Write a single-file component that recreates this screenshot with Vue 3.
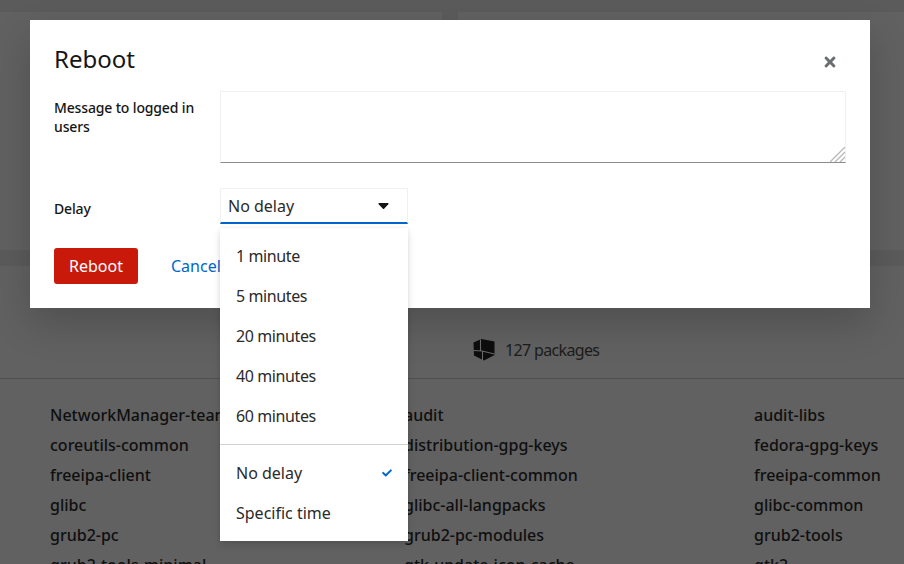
<script setup>
const packages = [
  'NetworkManager-team', 'audit', 'audit-libs',
  'coreutils-common', 'distribution-gpg-keys', 'fedora-gpg-keys',
  'freeipa-client', 'freeipa-client-common', 'freeipa-common',
  'glibc', 'glibc-all-langpacks', 'glibc-common',
  'grub2-pc', 'grub2-pc-modules', 'grub2-tools',
  'grub2-tools-minimal', 'gtk-update-icon-cache', 'gtk2'
]
const timedOptions = ['1 minute', '5 minutes', '20 minutes', '40 minutes', '60 minutes']
</script>

<template>
  <div class="page">
    <div class="cards">
      <div class="card"></div>
      <div class="card"></div>
    </div>
    <section class="details">
      <div class="summary">
        <svg class="bundle" viewBox="0 0 22 23" aria-hidden="true">
          <path d="M.5 4.500 8.500 1 21.500 3.500V17L11 22.500 1 17.500z" fill="#0d0d0d" />
          <path d="M7.500 1.500V13M.5 12.500l8.500.5 12.500 3M9.500 13v9" fill="none" stroke="#6a6a6a" stroke-width="1.100" />
        </svg>
        <span class="count">127 packages</span>
      </div>
      <div class="package-grid">
        <span v-for="name in packages" :key="name" class="package">{{ name }}</span>
      </div>
    </section>

    <div class="backdrop">
      <div class="modal">
        <header class="modal-head">
          <h1>Reboot</h1>
          <button class="close" aria-label="Close">
            <svg viewBox="0 0 352 512" aria-hidden="true">
              <path d="M242.72 256l100.07-100.07c12.28-12.28 12.28-32.19 0-44.48l-22.24-22.24c-12.28-12.28-32.19-12.28-44.48 0L176 189.28 75.93 89.21c-12.28-12.28-32.19-12.28-44.48 0L9.21 111.45c-12.28 12.28-12.28 32.19 0 44.48L109.28 256 9.21 356.07c-12.28 12.28-12.28 32.19 0 44.48l22.24 22.24c12.28 12.28 32.2 12.28 44.48 0L176 322.72l100.07 100.07c12.28 12.28 32.2 12.28 44.48 0l22.24-22.24c12.28-12.28 12.28-32.19 0-44.48L242.72 256z" />
            </svg>
          </button>
        </header>
        <div class="form">
          <label class="label message-label">Message to logged in users</label>
          <div class="message-wrap">
            <textarea class="message"></textarea>
            <svg class="grip" viewBox="0 0 15 15" aria-hidden="true">
              <path d="M0 15 15 0M5 15 15 5M10 15l5-5" fill="none" stroke="#b8b8b8" stroke-width="1.300" />
            </svg>
          </div>
          <label class="label delay-label">Delay</label>
          <div class="select-wrap">
            <div class="select">
              <span>No delay</span>
              <svg class="caret" viewBox="0 0 12 7" aria-hidden="true"><path d="M1 0h10c.9 0 1.3 1 .7 1.6L6.700 6.600c-.4.4-1 .4-1.400 0L.3 1.600C-.3 1 .1 0 1 0z" /></svg>
            </div>
            <div class="menu">
              <div class="menu-group">
                <div v-for="o in timedOptions" :key="o" class="option tight">{{ o }}</div>
              </div>
              <div class="menu-group last">
                <div class="option">
                  <span>No delay</span>
                  <svg class="check" viewBox="0 0 512 512" aria-hidden="true">
                    <path d="M173.898 439.404l-166.4-166.4c-9.997-9.997-9.997-26.206 0-36.204l36.203-36.204c9.997-9.998 26.207-9.998 36.204 0L192 312.69 432.095 72.596c9.997-9.997 26.207-9.997 36.204 0l36.203 36.204c9.997 9.997 9.997 26.206 0 36.204l-294.4 294.401c-9.998 9.997-26.207 9.997-36.204-.001z" />
                  </svg>
                </div>
                <div class="option">Specific time</div>
              </div>
            </div>
          </div>
        </div>
        <footer class="actions">
          <button class="danger">Reboot</button>
          <button class="link">Cancel</button>
        </footer>
      </div>
    </div>
  </div>
</template>

<style>
html, body { margin: 0; overflow: hidden; }
</style>

<style scoped>
.page {
  width: 904px;
  height: 564px;
  overflow: hidden;
  position: relative;
  background: #5b5b5b;
  padding-top: 12px;
  box-sizing: border-box;
  font-family: "Noto Sans", "Open Sans", sans-serif;
  color: #151515;
}
.cards {
  display: grid;
  grid-template-columns: 442px 446px;
  column-gap: 16px;
  height: 238px;
}
.card { background: #616161; }
.details {
  margin-top: 16px;
  background: #616161;
  height: 298px;
}
.summary {
  height: 113px;
  box-sizing: border-box;
  border-bottom: 1px solid #505050;
  padding: 74px 0 0 473px;
  display: flex;
  align-items: flex-start;
  gap: 10px;
  font-size: 16px;
  line-height: 20px;
  color: #1c1c1c;
}
.count { letter-spacing: -0.65px; }
.tight { letter-spacing: -0.4px; }
.bundle { width: 22px; height: 23px; margin-top: -2px; }
.package-grid {
  display: grid;
  grid-template-columns: 354px 350px 150px;
  grid-auto-rows: 30px;
  padding: 21px 0 0 50px;
}
.package {
  font-size: 16px;
  line-height: 30px;
  font-weight: 500;
  white-space: nowrap;
  color: #0f0f0f;
}
.backdrop {
  position: absolute;
  inset: 0;
}
.modal {
  position: absolute;
  left: 30px;
  top: 20px;
  width: 840px;
  height: 288px;
  box-sizing: border-box;
  padding: 24px;
  background: #fff;
  box-shadow: 0 16px 36px rgba(3, 3, 3, .18);
}
.modal-head {
  display: flex;
  justify-content: space-between;
  align-items: flex-start;
  height: 47px;
}
h1 {
  margin: -1px 0 0;
  font-size: 24px;
  line-height: 32px;
  font-weight: 400;
}
.close {
  border: 0;
  padding: 0;
  background: none;
  width: 12px;
  height: 16px;
  margin: 10px 10px 0 0;
  display: flex;
}
.close svg { width: 12px; height: 16px; fill: #6a6e73; }
.form {
  display: grid;
  grid-template-columns: 166px 626px;
  grid-template-rows: 72px 36px;
  row-gap: 25px;
}
.label {
  font-size: 14px;
  line-height: 19px;
  font-weight: 500;
  letter-spacing: -0.15px;
}
.message-label { padding-top: 7px; }
.delay-label { padding-top: 11px; }
.message-wrap { position: relative; height: 72px; }
.message {
  width: 626px;
  height: 72px;
  margin: 0;
  box-sizing: border-box;
  border: 1px solid #f0f0f0;
  border-bottom: 1px solid #8a8d90;
  outline: 0;
  background: #fff;
  resize: none;
  display: block;
}
.grip {
  position: absolute;
  right: 1px;
  bottom: 1px;
  width: 15px;
  height: 15px;
}
.select-wrap { position: relative; width: 188px; }
.select {
  height: 36px;
  box-sizing: border-box;
  border: 1px solid #f0f0f0;
  border-bottom: 2px solid #06c;
  padding: 0 18px 0 7px;
  display: flex;
  justify-content: space-between;
  align-items: center;
  font-size: 16px;
  color: #2a2a2a;
}
.caret { width: 11px; height: 6px; fill: #151515; }
.menu {
  position: absolute;
  left: 0;
  top: 40px;
  width: 188px;
  height: 313px;
  box-sizing: border-box;
  background: #fff;
  box-shadow: 0 4px 8px rgba(3, 3, 3, .12), 0 0 4px rgba(3, 3, 3, .06);
  padding-top: 8px;
}
.menu-group { padding-bottom: 8px; }
.menu-group.last {
  border-top: 1px solid #d2d2d2;
  padding-top: 8px;
}
.option {
  height: 40px;
  display: flex;
  justify-content: space-between;
  align-items: center;
  padding: 0 16px;
  font-size: 16px;
  color: #2a2a2a;
}
.check { width: 10px; height: 10px; fill: #06c; margin-top: -1px; }
.actions {
  display: flex;
  align-items: center;
  margin-top: 24px;
  gap: 17px;
}
.danger {
  width: 84px;
  height: 36px;
  border: 0;
  border-radius: 3px;
  background: #c9190b;
  color: #fff;
  font: 16px "Noto Sans", sans-serif;
}
.link {
  border: 0;
  background: none;
  padding: 0 16px;
  color: #06c;
  font: 16px "Noto Sans", sans-serif;
}
</style>
